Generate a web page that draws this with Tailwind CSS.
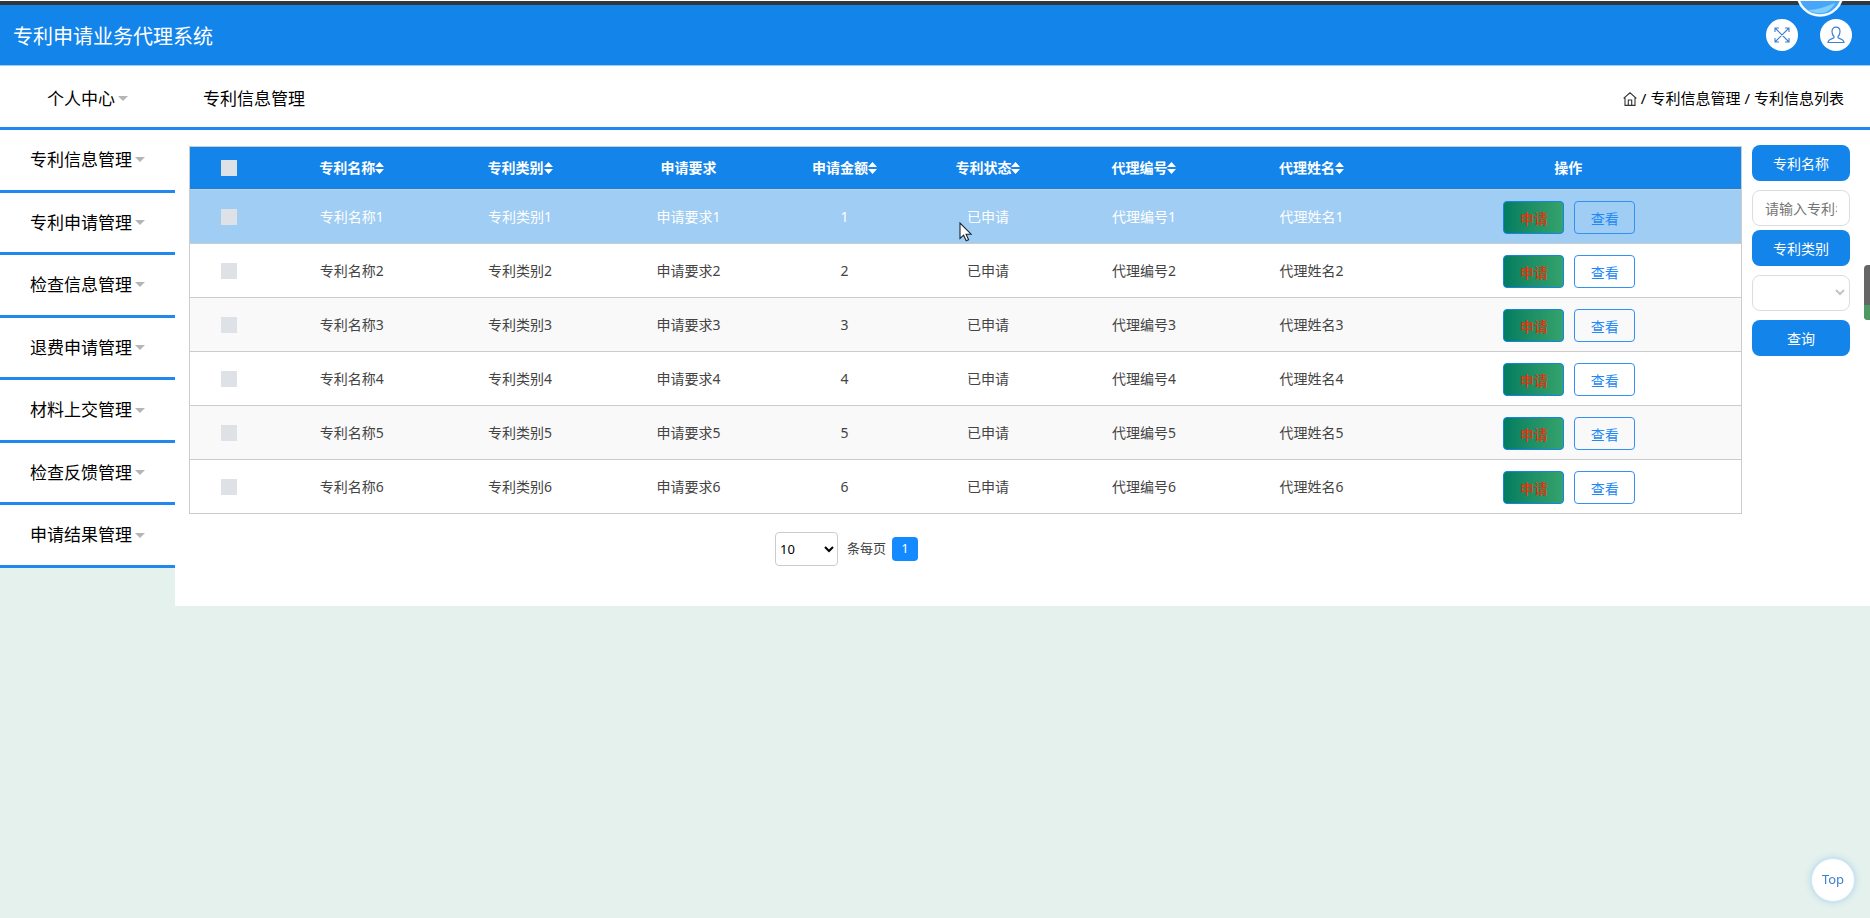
<!DOCTYPE html>
<html lang="zh-CN">
<head>
    <meta charset="UTF-8">
    <meta name="viewport" content="width=device-width, initial-scale=1.0">
    <title>专利申请业务代理系统</title>
    <script src="https://cdn.jsdelivr.net/npm/@tailwindcss/browser@4"></script>
</head>
<body class="min-h-screen bg-[#e4f1ec] font-['Noto_Sans','Noto_Sans_CJK_SC',sans-serif] text-[14px] text-[#444]">
    <!-- Header -->
    <header class="relative flex h-[66px] items-center justify-between border-t border-b border-t-white border-b-[#9bcdf8] bg-[#1384ea] pt-1 pr-[18px] pl-[13px]">
        <div class="absolute inset-x-0 top-0 h-1 bg-[#30383b]"></div>
        <a href="#" class="pt-1 text-[20px] text-white">专利申请业务代理系统</a>
        <div class="flex gap-[22px]">
            <button class="flex size-8 items-center justify-center rounded-full bg-white" aria-label="全屏">
                <svg class="size-4" viewBox="0 0 16 16" fill="none" stroke="#3f7fd0" stroke-width="1.1">
                    <path d="M1.5 1.5l13 13M14.5 1.5l-13 13M1 5V1h4M11 1h4v4M1 11v4h4M11 15h4v-4" />
                </svg>
            </button>
            <button class="flex size-8 items-center justify-center rounded-full bg-white" aria-label="用户">
                <svg class="size-[18px]" viewBox="0 0 18 18" fill="none" stroke="#3f7fd0" stroke-width="1.2">
                    <path d="M7 10.5C5.6 9.4 5 7.600 5 5.500 5 2.700 6.500 1.200 9 1.200s4 1.500 4 4.300c0 2.100-.6 3.900-2 5v1.200c0 .7 5.800 1 6 4.800H1c.2-3.800 6-4.100 6-4.800z" />
                </svg>
            </button>
        </div>
        <!-- floating ball, cut off by the top edge -->
        <div class="absolute top-0 right-[26px] h-4 w-12 overflow-hidden">
            <svg class="absolute bottom-0 size-12" viewBox="0 0 48 48">
                <circle cx="24" cy="24" r="22.5" fill="#49a5f8" stroke="#f2fbff" stroke-width="2.5" />
                <path d="M12 41c9 0 17-3 27-7-3 6-8 10.200-15 10.200-5 0-9-1.200-12-3.200z" fill="#7cd0fb" />
            </svg>
        </div>
    </header>

    <!-- Title bar -->
    <div class="flex h-16 items-center border-b-3 border-[#2189ee] bg-white pt-1 text-black">
        <button class="flex w-[175px] items-center justify-center gap-[3px] text-[17px]">个人中心
            <span class="border-x-5 border-t-5 border-x-transparent border-t-[#b5b5b5]"></span>
        </button>
        <h1 class="flex-1 pl-7 text-[17px]">专利信息管理</h1>
        <nav class="flex items-center gap-1 pr-[26px] text-[15px]">
            <a href="#" aria-label="首页">
                <svg class="size-[14px]" viewBox="0 0 14 14" fill="none" stroke="#333" stroke-width="1.1">
                    <path d="M.6 6.300L7 .8l6.400 5.500M2 5.300v8.100h10V5.300M5.300 13.400V8h3.400v5.400" />
                </svg>
            </a>
            <span>/</span>
            <a href="#">专利信息管理</a>
            <span>/</span>
            <a href="#">专利信息列表</a>
        </nav>
    </div>

    <div class="flex items-start">
        <!-- Sidebar -->
        <ul id="menu" class="grid min-h-[438px] w-[175px] shrink-0 auto-rows-fr bg-white text-[17px] text-black"></ul>

        <!-- Main panel -->
        <main class="flex min-w-0 flex-1 items-start gap-[10px] bg-white pt-[15px] pr-5 pb-10 pl-[14px]">
            <div class="min-w-0 flex-1 pt-px">
                <table class="w-full table-fixed border-collapse border border-[#ccc] text-center">
                    <colgroup>
                        <col class="w-[5%]">
                        <col class="w-[10.9%]">
                        <col class="w-[10.8%]">
                        <col class="w-[10.9%]">
                        <col class="w-[9.2%]">
                        <col class="w-[9.3%]">
                        <col class="w-[10.8%]">
                        <col class="w-[10.8%]">
                        <col>
                    </colgroup>
                    <thead id="head" class="bg-[#1384ea] text-white"></thead>
                    <tbody id="rows"></tbody>
                </table>
                <div class="mt-[18px] flex items-center justify-center pr-[238px]">
                    <label for="size" class="order-2 mr-[6px] ml-[9px] text-[13px]">条每页</label>
                    <select id="size" class="order-1 h-[34px] w-[63px] rounded border border-[#ccc] bg-white text-[13px] text-black">
                        <option>10</option>
                        <option>20</option>
                    </select>
                    <button class="order-3 h-6 w-[26px] rounded bg-[#138aff] text-[13px] text-white">1</button>
                </div>
            </div>

            <!-- Search form -->
            <form class="flex w-[98px] shrink-0 flex-col">
                <label for="name" class="flex h-9 items-center justify-center rounded-lg bg-[#1384ea] text-white">专利名称</label>
                <input id="name" type="text" placeholder="请输入专利名称" class="mt-[9px] h-9 rounded-lg border border-[#ddd] px-3 placeholder:text-[#757575]">
                <label for="type" class="mt-1 flex h-9 items-center justify-center rounded-lg bg-[#1384ea] text-white">专利类别</label>
                <div class="relative mt-[9px]">
                    <select id="type" class="block h-9 w-full appearance-none rounded-lg border border-[#ddd] bg-white px-3">
                        <option></option>
                    </select>
                    <svg class="pointer-events-none absolute top-[14px] right-[5px] h-[7px] w-[10px]" viewBox="0 0 10 7" fill="none" stroke="#c3c3c3" stroke-width="2">
                        <path d="M1 1l4 4 4-4" />
                    </svg>
                </div>
                <button type="button" class="mt-[9px] h-9 rounded-lg bg-[#1384ea] text-white">查询</button>
            </form>
        </main>
    </div>

    <!-- Side handle -->
    <div class="fixed top-[265px] right-0 flex h-[55px] w-[6px] flex-col justify-end overflow-hidden rounded-l bg-[#666]">
        <div class="h-[15px] bg-[#4e9a63]"></div>
    </div>

    <button class="fixed right-[15px] bottom-[16px] size-11 rounded-full border border-[#cfe5f3] bg-white text-[13px] text-[#3f7fd0] shadow-[0_0_6px_#a9d2ee]">Top</button>

    <!-- Mouse pointer -->
    <svg class="pointer-events-none absolute top-[222px] left-[959px] h-5 w-[14px]" viewBox="0 0 14 20" fill="#fff" stroke="#1b2533" stroke-width="1.1">
        <path d="M1 1v15.500l3.600-3.300 2.600 5.600 2.400-1.100L7.100 12.200h5z" />
    </svg>

    <script>
        const menus = ['专利信息管理', '专利申请管理', '检查信息管理', '退费申请管理', '材料上交管理', '检查反馈管理', '申请结果管理'];
        document.getElementById('menu').innerHTML = menus.map(name => `
            <li class="border-b-3 border-[#2189ee]">
                <button class="flex h-full w-full items-center justify-center gap-[3px]">${name}
                    <span class="border-x-5 border-t-5 border-x-transparent border-t-[#b5b5b5]"></span>
                </button>
            </li>`).join('');

        // second value: column can be sorted
        const columns = [['专利名称', true], ['专利类别', true], ['申请要求', false], ['申请金额', true], ['专利状态', true], ['代理编号', true], ['代理姓名', true], ['操作', false]];
        const sortIcon = `<svg class="inline-block h-3 w-[9px] align-[-1px]" viewBox="0 0 9 12" fill="#fff"><path d="M4.500 0L9 5H0zM4.500 12L0 7h9z"/></svg>`;
        const box = `<input type="checkbox" aria-label="选择" class="mx-auto block size-4 appearance-none bg-[#dee2e6]">`;
        document.getElementById('head').innerHTML = `<tr class="h-[43px]"><th>${box}</th>` +
            columns.map(([name, sort]) => `<th class="pb-[2px] font-bold whitespace-nowrap">${name}${sort ? sortIcon : ''}</th>`).join('') + '</tr>';

        let html = '';
        for (let i = 1; i <= 6; i++) {
            const look = i == 1 ? 'bg-[#9fcdf4] text-white' : i % 2 ? 'bg-[#f9f9f9]' : 'bg-white';
            html += `<tr class="h-[54px] border-t border-[#ccc] ${look}">
                <td>${box}</td>
                <td>专利名称${i}</td>
                <td>专利类别${i}</td>
                <td>申请要求${i}</td>
                <td>${i}</td>
                <td>已申请</td>
                <td>代理编号${i}</td>
                <td>代理姓名${i}</td>
                <td>
                    <div class="flex justify-center gap-[10px] pt-[2px] pl-[2px]">
                        <button class="h-[33px] w-[61px] rounded border border-[#1384ea] bg-linear-to-r from-[#007d60] to-[#34a36c] pt-[2px] font-medium text-[#e0340c]">申请</button>
                        <button class="h-[33px] w-[61px] rounded border border-[#3391f5] pt-[2px] text-[#2189f5]">查看</button>
                    </div>
                </td>
            </tr>`;
        }
        document.getElementById('rows').innerHTML = html;
    </script>
</body>
</html>
